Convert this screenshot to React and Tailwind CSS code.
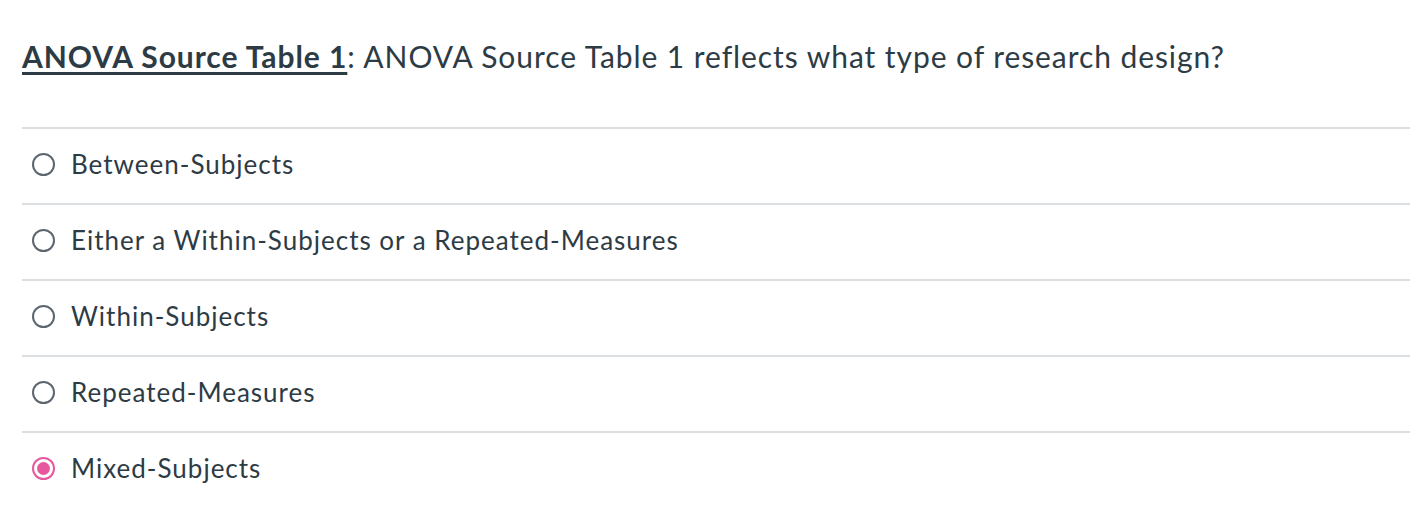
import React from "react";

const options = [
  { label: "Between-Subjects", checked: false },
  { label: "Either a Within-Subjects or a Repeated-Measures", checked: false },
  { label: "Within-Subjects", checked: false },
  { label: "Repeated-Measures", checked: false },
  { label: "Mixed-Subjects", checked: true },
];

function Radio({ checked }) {
  if (checked) {
    return (
      <span className="flex h-[23px] w-[23px] shrink-0 items-center justify-center rounded-full border-2 border-[#e6579e] bg-white">
        <span className="h-[13px] w-[13px] rounded-full bg-[#e6579e]" />
      </span>
    );
  }
  return (
    <span className="h-[23px] w-[23px] shrink-0 rounded-full border-2 border-[#5c6670] bg-white" />
  );
}

export default function App() {
  return (
    <div
      className="min-h-[528px] w-[1414px] bg-white pl-[22px] pr-[4px] text-[#2d3b45]"
      style={{ fontFamily: "Lato, 'Noto Sans', sans-serif" }}
    >
      <div className="pt-[34px] text-[30px] leading-[45px] tracking-[0.93px]">
        <span className="font-bold underline decoration-[3px] underline-offset-[4px]">
          ANOVA Source Table 1
        </span>
        : ANOVA Source Table 1 reflects what type of research design?
      </div>
      <div className="mt-[48px]">
        {options.map((o) => (
          <div key={o.label} className="border-t-2 border-[#dcdfe2]">
            <label className="flex h-[74px] items-center gap-[16px] pl-[10px] pb-[4px] text-[26px] tracking-[1px]">
              <Radio checked={o.checked} />
              <span>{o.label}</span>
            </label>
          </div>
        ))}
      </div>
    </div>
  );
}
